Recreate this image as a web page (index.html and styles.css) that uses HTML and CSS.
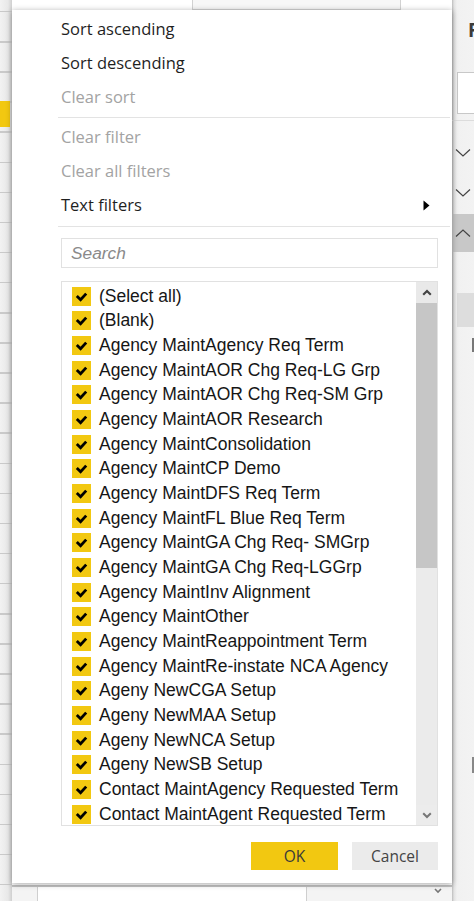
FILE: index.html
```html
<!DOCTYPE html>
<html>
<head>
<meta charset="utf-8">
<link rel="stylesheet" href="styles.css">
</head>
<body>
<div class="page">
  <div class="leftstrip"><div class="yellowcell"></div></div>
  <div class="center">
    <div class="topbox"></div>
    <div class="spacer"></div>
    <div class="bottomrow">
      <div class="bcell c1"></div>
      <div class="bcell c2"></div>
      <div class="bcell c3">
        <svg class="bchev" width="8" height="6" viewBox="0 0 8 6"><path d="M1 1 L4 4 L7 1" fill="none" stroke="#777" stroke-width="1.6"/></svg>
      </div>
    </div>
  </div>
  <div class="rightpanel">
    <div class="rp-title">F</div>
    <div class="rp-input"></div>
    <div class="rp-line"></div>
    <div class="rp-row first"><svg width="16" height="10" viewBox="0 0 16 10"><path d="M1 1.5 L8 8 L15 1.5" fill="none" stroke="#444" stroke-width="1.2"/></svg></div>
    <div class="rp-row"><svg width="16" height="10" viewBox="0 0 16 10"><path d="M1 1.5 L8 8 L15 1.5" fill="none" stroke="#444" stroke-width="1.2"/></svg></div>
    <div class="rp-row rp-active"><svg width="16" height="10" viewBox="0 0 16 10"><path d="M1 8.5 L8 2 L15 8.5" fill="none" stroke="#444" stroke-width="1.2"/></svg></div>
    <div class="rp-greybox"></div>
    <div class="rp-mark"></div>
    <div class="rp-fill"></div>
    <div class="rp-mark2"></div>
  </div>

  <div class="popup">
    <div class="menu">
      <div class="mi">Sort ascending</div>
      <div class="mi">Sort descending</div>
      <div class="mi disabled">Clear sort</div>
      <div class="sep"></div>
      <div class="mi disabled second">Clear filter</div>
      <div class="mi disabled">Clear all filters</div>
      <div class="mi sub">Text filters <svg class="tri" width="7" height="11" viewBox="0 0 7 11"><path d="M0.5 0.5 L6.5 5.5 L0.5 10.5 Z" fill="#000"/></svg></div>
      <div class="sep sep2"></div>
    </div>
    <div class="search">Search</div>
    <div class="listbox">
      <div class="items">
        <div class="row"><span class="cb"><svg width="19" height="19" viewBox="0 0 19 19"><path d="M4.8 9 L8.6 12.8 L14.2 6.6" fill="none" stroke="#000" stroke-width="2.8"/></svg></span>(Select all)</div>
        <div class="row"><span class="cb"><svg width="19" height="19" viewBox="0 0 19 19"><path d="M4.8 9 L8.6 12.8 L14.2 6.6" fill="none" stroke="#000" stroke-width="2.8"/></svg></span>(Blank)</div>
        <div class="row"><span class="cb"><svg width="19" height="19" viewBox="0 0 19 19"><path d="M4.8 9 L8.6 12.8 L14.2 6.6" fill="none" stroke="#000" stroke-width="2.8"/></svg></span>Agency MaintAgency Req Term</div>
        <div class="row"><span class="cb"><svg width="19" height="19" viewBox="0 0 19 19"><path d="M4.8 9 L8.6 12.8 L14.2 6.6" fill="none" stroke="#000" stroke-width="2.8"/></svg></span>Agency MaintAOR Chg Req-LG Grp</div>
        <div class="row"><span class="cb"><svg width="19" height="19" viewBox="0 0 19 19"><path d="M4.8 9 L8.6 12.8 L14.2 6.6" fill="none" stroke="#000" stroke-width="2.8"/></svg></span>Agency MaintAOR Chg Req-SM Grp</div>
        <div class="row"><span class="cb"><svg width="19" height="19" viewBox="0 0 19 19"><path d="M4.8 9 L8.6 12.8 L14.2 6.6" fill="none" stroke="#000" stroke-width="2.8"/></svg></span>Agency MaintAOR Research</div>
        <div class="row"><span class="cb"><svg width="19" height="19" viewBox="0 0 19 19"><path d="M4.8 9 L8.6 12.8 L14.2 6.6" fill="none" stroke="#000" stroke-width="2.8"/></svg></span>Agency MaintConsolidation</div>
        <div class="row"><span class="cb"><svg width="19" height="19" viewBox="0 0 19 19"><path d="M4.8 9 L8.6 12.8 L14.2 6.6" fill="none" stroke="#000" stroke-width="2.8"/></svg></span>Agency MaintCP Demo</div>
        <div class="row"><span class="cb"><svg width="19" height="19" viewBox="0 0 19 19"><path d="M4.8 9 L8.6 12.8 L14.2 6.6" fill="none" stroke="#000" stroke-width="2.8"/></svg></span>Agency MaintDFS Req Term</div>
        <div class="row"><span class="cb"><svg width="19" height="19" viewBox="0 0 19 19"><path d="M4.8 9 L8.6 12.8 L14.2 6.6" fill="none" stroke="#000" stroke-width="2.8"/></svg></span>Agency MaintFL Blue Req Term</div>
        <div class="row"><span class="cb"><svg width="19" height="19" viewBox="0 0 19 19"><path d="M4.8 9 L8.6 12.8 L14.2 6.6" fill="none" stroke="#000" stroke-width="2.8"/></svg></span>Agency MaintGA Chg Req- SMGrp</div>
        <div class="row"><span class="cb"><svg width="19" height="19" viewBox="0 0 19 19"><path d="M4.8 9 L8.6 12.8 L14.2 6.6" fill="none" stroke="#000" stroke-width="2.8"/></svg></span>Agency MaintGA Chg Req-LGGrp</div>
        <div class="row"><span class="cb"><svg width="19" height="19" viewBox="0 0 19 19"><path d="M4.8 9 L8.6 12.8 L14.2 6.6" fill="none" stroke="#000" stroke-width="2.8"/></svg></span>Agency MaintInv Alignment</div>
        <div class="row"><span class="cb"><svg width="19" height="19" viewBox="0 0 19 19"><path d="M4.8 9 L8.6 12.8 L14.2 6.6" fill="none" stroke="#000" stroke-width="2.8"/></svg></span>Agency MaintOther</div>
        <div class="row"><span class="cb"><svg width="19" height="19" viewBox="0 0 19 19"><path d="M4.8 9 L8.6 12.8 L14.2 6.6" fill="none" stroke="#000" stroke-width="2.8"/></svg></span>Agency MaintReappointment Term</div>
        <div class="row"><span class="cb"><svg width="19" height="19" viewBox="0 0 19 19"><path d="M4.8 9 L8.6 12.8 L14.2 6.6" fill="none" stroke="#000" stroke-width="2.8"/></svg></span>Agency MaintRe-instate NCA Agency</div>
        <div class="row"><span class="cb"><svg width="19" height="19" viewBox="0 0 19 19"><path d="M4.8 9 L8.6 12.8 L14.2 6.6" fill="none" stroke="#000" stroke-width="2.8"/></svg></span>Ageny NewCGA Setup</div>
        <div class="row"><span class="cb"><svg width="19" height="19" viewBox="0 0 19 19"><path d="M4.8 9 L8.6 12.8 L14.2 6.6" fill="none" stroke="#000" stroke-width="2.8"/></svg></span>Ageny NewMAA Setup</div>
        <div class="row"><span class="cb"><svg width="19" height="19" viewBox="0 0 19 19"><path d="M4.8 9 L8.6 12.8 L14.2 6.6" fill="none" stroke="#000" stroke-width="2.8"/></svg></span>Ageny NewNCA Setup</div>
        <div class="row"><span class="cb"><svg width="19" height="19" viewBox="0 0 19 19"><path d="M4.8 9 L8.6 12.8 L14.2 6.6" fill="none" stroke="#000" stroke-width="2.8"/></svg></span>Ageny NewSB Setup</div>
        <div class="row"><span class="cb"><svg width="19" height="19" viewBox="0 0 19 19"><path d="M4.8 9 L8.6 12.8 L14.2 6.6" fill="none" stroke="#000" stroke-width="2.8"/></svg></span>Contact MaintAgency Requested Term</div>
        <div class="row"><span class="cb"><svg width="19" height="19" viewBox="0 0 19 19"><path d="M4.8 9 L8.6 12.8 L14.2 6.6" fill="none" stroke="#000" stroke-width="2.8"/></svg></span>Contact MaintAgent Requested Term</div>
      </div>
      <div class="scrollbar">
        <div class="sb-btn"><svg width="10" height="7" viewBox="0 0 10 7"><path d="M1.2 5.8 L5 2 L8.8 5.8" fill="none" stroke="#444" stroke-width="2.2"/></svg></div>
        <div class="sb-thumb"></div>
        <div class="sb-track"></div>
        <div class="sb-btn down"><svg width="10" height="7" viewBox="0 0 10 7"><path d="M1.2 1.2 L5 5 L8.8 1.2" fill="none" stroke="#777" stroke-width="2"/></svg></div>
      </div>
    </div>
    <div class="buttons">
      <div class="btn ok">OK</div>
      <div class="btn cancel">Cancel</div>
    </div>
  </div>
</div>
</body>
</html>
```
FILE: styles.css
```css
html, body {
  margin: 0;
  padding: 0;
}
body {
  width: 474px;
  height: 901px;
  overflow: hidden;
  background: #ffffff;
  font-family: "Open Sans", "Liberation Sans", sans-serif;
}
.page {
  position: relative;
  display: flex;
  width: 474px;
  height: 901px;
}
.leftstrip {
  width: 12px;
  flex: none;
  background:
    repeating-linear-gradient(180deg, transparent 0, transparent 11px, #c9c9c9 11px, #c9c9c9 12.5px, transparent 12.5px, transparent 30.1px),
    linear-gradient(90deg, #f2f2f2 0, #e8e8e8 8px, #d6d6d6 11px, #cfcfcf 12px);
}
.yellowcell {
  margin-top: 101px;
  width: 10px;
  height: 26px;
  background: #f2c811;
}
.center {
  flex: 1;
  display: flex;
  flex-direction: column;
}
.topbox {
  margin-left: 180px;
  width: 207px;
  height: 9px;
  border: 1px solid #d2d2d2;
  border-top: none;
  background: #f7f7f7;
}
.spacer {
  flex: 1;
}
.bottomrow {
  height: 14px;
  display: flex;
  border-top: 2px solid #c2c2c2;
  background: #f4f4f4;
}
.bcell {
  height: 100%;
  border-right: 1px solid #cfcfcf;
}
.c1 { width: 25px; }
.c2 { width: 268px; background: #fff; }
.c3 { flex: 1; display: flex; justify-content: flex-end; padding-right: 10px; border-right: none; }
.bchev { margin-top: 1px; }

.rightpanel {
  width: 22px;
  flex: none;
  display: flex;
  flex-direction: column;
  background: linear-gradient(90deg, #bcbcbc 0, #e2e2e2 2px, #f1f1f1 5px, #f3f3f3 100%);
  overflow: hidden;
}
.rp-title {
  margin-top: 17px;
  padding-left: 16px;
  height: 26px;
  font-family: "Open Sans", sans-serif;
  font-weight: 700;
  font-size: 19px;
  line-height: 26px;
  color: #3a3a3a;
  white-space: nowrap;
}
.rp-input {
  margin-top: 29px;
  margin-left: 5px;
  height: 40px;
  background: #fff;
  border: 1px solid #c8c8c8;
  border-right: none;
}
.rp-line {
  margin-top: 6px;
  height: 1px;
  background: #dcdcdc;
}
.rp-row {
  height: 40px;
  display: flex;
  align-items: center;
  padding-left: 3px;
}
.rp-row.first { margin-top: 12px; }
.rp-active {
  background: #c8c8c8;
  height: 38px;
  margin-top: 1px;
}
.rp-greybox {
  margin-top: 41px;
  margin-left: 5px;
  height: 34px;
  background: #dddddd;
}
.rp-mark {
  margin-top: 11px;
  margin-left: 20px;
  height: 14px;
  background: #777;
}
.rp-fill {
  height: 405px;
}
.rp-mark2 {
  margin-left: 20px;
  height: 16px;
  background: #888;
}

.popup {
  position: absolute;
  left: 12px;
  top: 10px;
  width: 440px;
  height: 873px;
  box-sizing: border-box;
  background: #fff;
  box-shadow: 0 1px 6px rgba(0,0,0,0.35);
  padding: 2px 14px 0 49px;
  display: flex;
  flex-direction: column;
}
.menu {
  display: flex;
  flex-direction: column;
}
.mi {
  height: 34px;
  line-height: 34px;
  font-size: 16.5px;
  color: #1f1f1f;
  display: flex;
  align-items: center;
  white-space: nowrap;
}
.mi.disabled {
  color: #a3a3a3;
}
.mi.second { margin-top: 2px; }
.mi.sub {
  justify-content: space-between;
}
.tri {
  margin-right: 8px;
}
.sep {
  height: 1px;
  background: #e3e3e3;
  margin: 3px -12px 0 -3px;
}
.sep2 {
  margin-top: 4px;
}
.search {
  margin-top: 11px;
  height: 30px;
  box-sizing: border-box;
  border: 1px solid #e1e1e1;
  padding-left: 9px;
  font-family: "Liberation Sans", Arial, sans-serif;
  font-style: italic;
  font-size: 17.3px;
  line-height: 28px;
  color: #8a8a8a;
}
.listbox {
  margin-top: 13px;
  height: 545px;
  box-sizing: border-box;
  border: 1px solid #e1e1e1;
  display: flex;
  overflow: hidden;
}
.items {
  flex: 1;
  padding-top: 2px;
  overflow: hidden;
}
.row {
  height: 24.67px;
  display: flex;
  align-items: center;
  padding-left: 10px;
  font-family: "Liberation Sans", Arial, sans-serif;
  font-size: 17.5px;
  color: #161616;
  white-space: nowrap;
}
.cb {
  width: 19px;
  height: 19px;
  background: #f2c811;
  margin-right: 8px;
  flex: none;
  display: block;
}
.cb svg { display: block; }
.scrollbar {
  width: 21px;
  flex: none;
  display: flex;
  flex-direction: column;
}
.sb-btn {
  height: 21px;
  background: #e9e9e9;
  display: flex;
  align-items: center;
  justify-content: center;
}
.sb-btn.down {
  background: #ececec;
  height: 20px;
}
.sb-thumb {
  height: 265px;
  background: #c6c6c6;
}
.sb-track {
  flex: 1;
  background: #ebebeb;
}
.buttons {
  margin-top: 16px;
  display: flex;
  justify-content: flex-end;
  gap: 14px;
}
.btn {
  height: 28px;
  line-height: 28px;
  text-align: center;
  font-size: 15.5px;
}
.ok {
  width: 87px;
  background: #f2c811;
  color: #3a3a3a;
}
.cancel {
  width: 86px;
  background: #ebebeb;
  color: #444;
}
```
